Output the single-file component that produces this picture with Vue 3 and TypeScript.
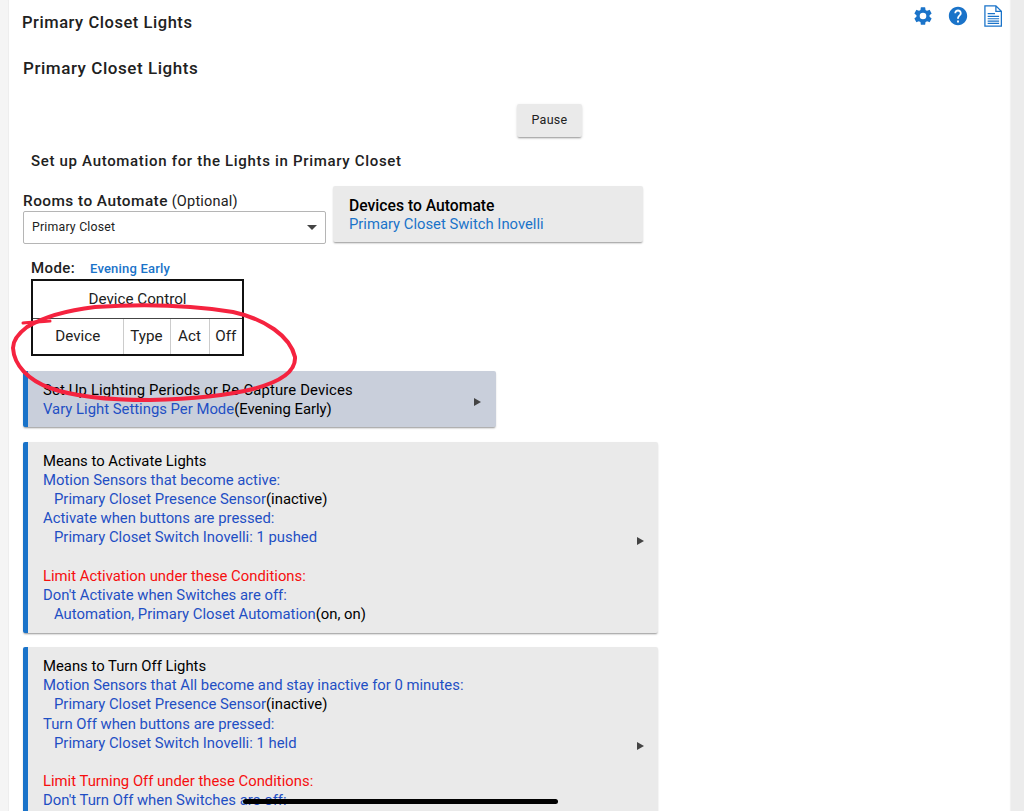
<script setup lang="ts">
interface Line { parts: { t: string; c: string }[]; indent?: boolean }
const b = 'blue', k = 'black', r = 'red'
const l = (t: string, c: string, extra?: { t: string; c: string }, indent = false): Line => ({
  parts: extra ? [{ t, c }, extra] : [{ t, c }],
  indent,
})
const activate: Line[] = [
  l('Means to Activate Lights', k),
  l('Motion Sensors that become active:', b),
  l('Primary Closet Presence Sensor', b, { t: '(inactive)', c: k }, true),
  l('Activate when buttons are pressed:', b),
  l('Primary Closet Switch Inovelli: 1 pushed', b, undefined, true),
  l('\u00a0', k),
  l('Limit Activation under these Conditions:', r),
  l("Don't Activate when Switches are off:", b),
  l('Automation, Primary Closet Automation', b, { t: '(on, on)', c: k }, true),
]
const turnOff: Line[] = [
  l('Means to Turn Off Lights', k),
  l('Motion Sensors that All become and stay inactive for 0 minutes:', b),
  l('Primary Closet Presence Sensor', b, { t: '(inactive)', c: k }, true),
  l('Turn Off when buttons are pressed:', b),
  l('Primary Closet Switch Inovelli: 1 held', b, undefined, true),
  l('\u00a0', k),
  l('Limit Turning Off under these Conditions:', r),
  l("Don't Turn Off when Switches are off:", b),
]
const cards = [activate, turnOff]
</script>

<template>
  <div class="screen">
    <aside class="gutter left"></aside>
    <main class="page">
      <header class="top">
        <span class="app-title">Primary Closet Lights</span>
        <div class="icons">
          <svg class="ic" viewBox="0 0 24 24"><path d="M19.14 12.94c.04-.3.06-.61.06-.94s-.02-.64-.07-.94l2.03-1.58a.49.49 0 0 0 .12-.61l-1.92-3.32a.49.49 0 0 0-.59-.22l-2.39.96c-.5-.38-1.03-.7-1.62-.94l-.36-2.54a.48.48 0 0 0-.48-.41h-3.84a.48.48 0 0 0-.47.41l-.36 2.54c-.59.24-1.13.57-1.62.94l-2.39-.96a.48.48 0 0 0-.59.22L2.74 8.87a.47.47 0 0 0 .12.61l2.03 1.58c-.05.3-.09.63-.09.94s.02.64.07.94l-2.03 1.58a.49.49 0 0 0-.12.61l1.92 3.32c.12.22.37.29.59.22l2.39-.96c.5.38 1.03.7 1.62.94l.36 2.54c.05.24.24.41.48.41h3.84c.24 0 .44-.17.47-.41l.36-2.54c.59-.24 1.13-.56 1.62-.94l2.39.96c.22.08.47 0 .59-.22l1.92-3.32a.47.47 0 0 0-.12-.61l-2.01-1.58zM12 15.6A3.61 3.61 0 0 1 8.4 12 3.61 3.61 0 0 1 12 8.4a3.61 3.61 0 0 1 3.6 3.6 3.61 3.61 0 0 1-3.6 3.6z"/></svg>
          <svg class="ic" viewBox="0 0 24 24"><path d="M12 2C6.48 2 2 6.48 2 12s4.48 10 10 10 10-4.48 10-10S17.52 2 12 2zm1 17h-2v-2h2v2zm2.07-7.75-.9.92C13.45 12.9 13 13.5 13 15h-2v-.5c0-1.1.45-2.1 1.17-2.83l1.24-1.26c.37-.36.59-.86.59-1.41 0-1.1-.9-2-2-2s-2 .9-2 2H8c0-2.21 1.79-4 4-4s4 1.79 4 4c0 .88-.36 1.68-.93 2.25z"/></svg>
          <svg class="doc" viewBox="0 0 20 24" fill="none" stroke="#1a73c9">
            <path stroke-width="1.4" d="M1 .9h12l6 6v16.2H1zM13 .9v6h6" />
            <path stroke-width="1.3" d="M4 9.5h8M4 12.5h12.5M4 15h12.5M4 17.5h12.5M4 20h12.5" />
          </svg>
        </div>
      </header>

      <h2 class="page-title">Primary Closet Lights</h2>

      <div class="pause-row"><button class="pause">Pause</button></div>

      <h3 class="setup">Set up Automation for the Lights in Primary Closet</h3>

      <div class="pick-row">
        <div class="field">
          <div class="field-label"><b>Rooms to Automate</b> (Optional)</div>
          <div class="select">
            <span>Primary Closet</span>
            <i class="caret"></i>
          </div>
        </div>
        <div class="devices">
          <div class="devices-title">Devices to Automate</div>
          <div class="devices-value">Primary Closet Switch Inovelli</div>
        </div>
      </div>

      <div class="mode"><b>Mode:</b><span>Evening Early</span></div>

      <table class="control">
        <colgroup>
          <col class="c1" /><col class="c2" /><col class="c3" /><col />
        </colgroup>
        <tbody>
          <tr><td colspan="4" class="head">Device Control</td></tr>
          <tr class="cols">
            <td>Device</td>
            <td>Type</td>
            <td>Act</td>
            <td>Off</td>
          </tr>
        </tbody>
      </table>

      <div class="card periods">
        <div class="card-text">
          <div class="black spaced">Set Up Lighting Periods or Re-Capture Devices</div>
          <div><span class="blue">Vary Light Settings Per Mode</span><span class="black">(Evening Early)</span></div>
        </div>
        <i class="arrow"></i>
      </div>

      <div v-for="(card, i) in cards" :key="i" class="card wide">
        <div class="card-text">
          <div v-for="(line, j) in card" :key="j" :class="{ indent: line.indent }">
            <span v-for="(p, m) in line.parts" :key="m" :class="p.c">{{ p.t }}</span>
          </div>
        </div>
        <i class="arrow"></i>
      </div>
    </main>
    <aside class="gutter right"></aside>

    <svg class="scribble" viewBox="0 0 1024 811" fill="none">
      <path d="M23 323c7-1 15-1 27-2" stroke="#f5233f" stroke-width="3" stroke-linecap="round"/>
      <path d="M27 327C45 316 70 310 95 307C140 304 190 305 233 312C265 319 290 336 295 357C296 372 280 382 253 389C225 396 190 399 150 400C110 400 75 397 50 388C28 380 14 365 13 348C13 340 19 333 27 327Z" stroke="#f5233f" stroke-width="4" stroke-linejoin="round"/>
    </svg>
    <div class="home-bar"></div>
  </div>
</template>

<style>
html, body { margin: 0; background: #fff; }
</style>

<style scoped>
.screen {
  position: relative;
  display: flex;
  width: 1024px;
  height: 811px;
  overflow: hidden;
  background: #fff;
  font-family: Roboto, "Liberation Sans", sans-serif;
  color: #212121;
}
.gutter { flex: none; background: #f5f5f5; }
.gutter.left { width: 9px; box-shadow: inset -1px 0 1px #eee; }
.gutter.right { width: 13px; background: #ececec; box-shadow: -1px 0 1px #f2f2f2; }
.page { flex: 1; min-width: 0; padding-left: 13px; }

.top { display: flex; align-items: flex-start; justify-content: space-between; height: 46px; }
.app-title { margin-top: 14px; font-size: 16.5px; font-weight: 500; letter-spacing: .55px; line-height: 18px; }
.icons { display: flex; align-items: center; gap: 12.5px; margin-top: 5px; margin-right: 9px; }
.ic { width: 22px; height: 22px; fill: #1a73c9; }
.doc { width: 18.3px; height: 22px; margin-left: 2.5px; }

.page-title { margin: 13px 0 0 1px; font-size: 17px; font-weight: 500; letter-spacing: .55px; line-height: 19px; }

.pause-row { display: flex; margin-top: 26px; padding-left: 495px; }
.pause {
  width: 65px; height: 33px; padding: 0 0 2px; border: 0; border-radius: 2px; background: #eaeaea;
  font: 400 12.5px Roboto, sans-serif; letter-spacing: .3px; color: #212121;
  box-shadow: 0 2px 2px -1px rgba(0,0,0,.35), 0 1px 3px rgba(0,0,0,.12);
}
.setup { margin: 16px 0 0 9px; font-size: 15px; font-weight: 500; letter-spacing: .68px; line-height: 17px; }

.pick-row { display: flex; align-items: flex-start; gap: 7px; margin: 16px 0 0 1px; }
.field { width: 303px; padding-top: 6px; }
.field-label { height: 18px; font-size: 14.5px; line-height: 18px; letter-spacing: .2px; }
.field-label b { font-size: 15.4px; font-weight: 500; letter-spacing: .45px; }
.select {
  display: flex; align-items: center; justify-content: space-between; box-sizing: border-box;
  height: 33px; margin-top: 1px; padding: 0 8px; border: 1px solid #b5b5b5; border-radius: 2px;
  font-size: 12.3px; letter-spacing: .2px;
}
.select span { margin-top: -1px; }
.caret { width: 0; height: 0; border: 5px solid transparent; border-top-color: #444; border-bottom-width: 0; }
.devices {
  box-sizing: border-box; width: 310px; height: 56px; padding: 10px 16px; background: #eaeaea;
  border-radius: 2px; box-shadow: 0 2px 2px -1px rgba(0,0,0,.35), 0 1px 2px rgba(0,0,0,.1);
  line-height: 19px;
}
.devices-title { font-size: 15.7px; font-weight: 500; color: #000; }
.devices-value { font-size: 14.8px; color: #1a73c9; }

.mode { display: flex; align-items: baseline; height: 20px; padding-top: 15px; margin-left: 9px; }
.mode b { width: 59px; font-size: 15px; font-weight: 500; letter-spacing: .4px; }
.mode span { font-size: 13px; font-weight: 500; color: #1a73c9; letter-spacing: .2px; }

.control {
  box-sizing: border-box; width: 213px; height: 77px; margin-left: 9px; border: 2px solid #111;
  border-collapse: collapse; table-layout: fixed; font-size: 15.2px; text-align: center;
}
.control td { padding: 0; color: #212121; }
.control .head { height: 35px; padding-bottom: 2px; border-bottom: 1px solid #444; }
.control .cols td { padding-bottom: 2px; }
.cols td + td { border-left: 1px solid #ccc; }
.c1 { width: 91px; }
.c2 { width: 47px; }
.c3 { width: 39px; }

.card {
  position: relative; display: flex; align-items: center; justify-content: space-between; box-sizing: border-box;
  margin-left: 1px; border-left: 5px solid #1a73c9; border-radius: 2px; background: #eaeaea;
  box-shadow: 0 2px 2px -1px rgba(0,0,0,.35), 0 1px 2px rgba(0,0,0,.1);
  font-size: 14.85px; line-height: 19.2px;
}
.periods { width: 473px; height: 56px; margin-top: 15px; background: #c9cfdb; }
.periods .card-text { padding-top: 2px; }
.periods .arrow { margin-right: 15px; }
.spaced { letter-spacing: .15px; }
.wide { width: 635px; height: 191px; margin-top: 14.5px; }
.wide .card-text { align-self: flex-start; padding-top: 10px; }
.wide .arrow { margin-top: 7px; }
.card-text { padding-left: 15px; }
.indent { padding-left: 11px; }
.arrow { flex: none; width: 0; height: 0; margin: 5px 14px 0 0; border: 4px solid transparent; border-left: 7px solid #444; border-right-width: 0; }
.black { color: #000; }
.blue { color: #1f4fc4; }
.red { color: #f60f0f; }

.scribble { position: absolute; inset: 0; width: 1024px; height: 811px; pointer-events: none; }
.home-bar { position: absolute; left: 243px; top: 799px; width: 315px; height: 5px; border-radius: 3px; background: #000; }
</style>
